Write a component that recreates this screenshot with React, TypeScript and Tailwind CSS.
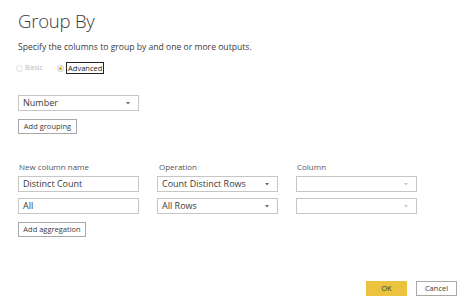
import React from "react";

const Caret = ({ light }: { light?: boolean }) => (
    <svg width="4" height="3" viewBox="0 0 4 3" className="absolute right-[8px] top-[6px]">
        <path d="M0 0 L4 0 L2 2.5 Z" fill={light ? "#c8c8c8" : "#666"} />
    </svg>
);

const Select = ({ value, light, w }: { value?: string; light?: boolean; w: string }) => (
    <div className={`relative ${w} h-[16px] border border-[#c6c6c6] bg-white pl-[4px] text-[9px] leading-[14px] text-[#3a3a3a]`}>
        {value}
        <Caret light={light} />
    </div>
);

const Input = ({ value }: { value: string }) => (
    <div className="w-[121px] h-[16px] border border-[#c6c6c6] bg-white pl-[4px] text-[9px] leading-[14px] text-[#3a3a3a]">{value}</div>
);

const Button = ({ label, w }: { label: string; w: string }) => (
    <div className={`${w} h-[15px] border border-[#a8a8a8] bg-white text-center text-[7.5px] leading-[13px] text-[#3a3a3a]`}>{label}</div>
);

export default function App() {
    return (
        <div className="w-[474px] h-[303px] bg-white pl-[18px] pt-[9px] relative" style={{ fontFamily: "'Open Sans', 'Noto Sans', sans-serif" }}>
            <h1 className="text-[18.5px] font-light leading-[24px] text-[#3a3a3a] tracking-[-0.2px]">Group By</h1>
            <p className="mt-[8px] text-[8.6px] leading-[12px] text-[#3a3a3a]">Specify the columns to group by and one or more outputs.</p>
            <div className="mt-[9px] -ml-[2px] flex items-center h-[12px] text-[7.5px]">
                <span className="w-[7px] h-[7px] rounded-full border border-[#dcdcdc] bg-white"></span>
                <span className="ml-[2px] text-[#bcbcbc]">Basic</span>
                <span className="ml-[14px] w-[7px] h-[7px] rounded-full border border-[#c8c8c8] bg-white flex items-center justify-center">
                    <span className="w-[3px] h-[3px] rounded-full bg-[#d9a400]"></span>
                </span>
                <span className="ml-[2px] border border-[#222] px-[1px] leading-[10px] text-[#222]">Advanced</span>
            </div>
            <div className="mt-[21px]">
                <Select value="Number" w="w-[121px]" />
            </div>
            <div className="mt-[8px]">
                <Button label="Add grouping" w="w-[59px]" />
            </div>
            <div className="mt-[27px] flex text-[8px] leading-[12px] text-[#555]">
                <span className="w-[140px] pl-[1px]">New column name</span>
                <span className="w-[139px] pl-[1px]">Operation</span>
                <span>Column</span>
            </div>
            <div className="mt-[3px] flex flex-col gap-[6px]">
                <div className="flex gap-[18px]">
                    <Input value="Distinct Count" />
                    <Select value="Count Distinct Rows" w="w-[121px]" />
                    <Select light w="w-[121px]" />
                </div>
                <div className="flex gap-[18px]">
                    <Input value="All" />
                    <Select value="All Rows" w="w-[121px]" />
                    <Select light w="w-[121px]" />
                </div>
            </div>
            <div className="mt-[8px]">
                <Button label="Add aggregation" w="w-[68px]" />
            </div>
            <div className="absolute right-[17px] bottom-[7px] flex gap-[9px]">
                <div className="w-[41px] h-[15px] bg-[#ecc33f] text-center text-[7.5px] leading-[15px] text-[#3a3a3a]">OK</div>
                <Button label="Cancel" w="w-[41px]" />
            </div>
        </div>
    );
}
